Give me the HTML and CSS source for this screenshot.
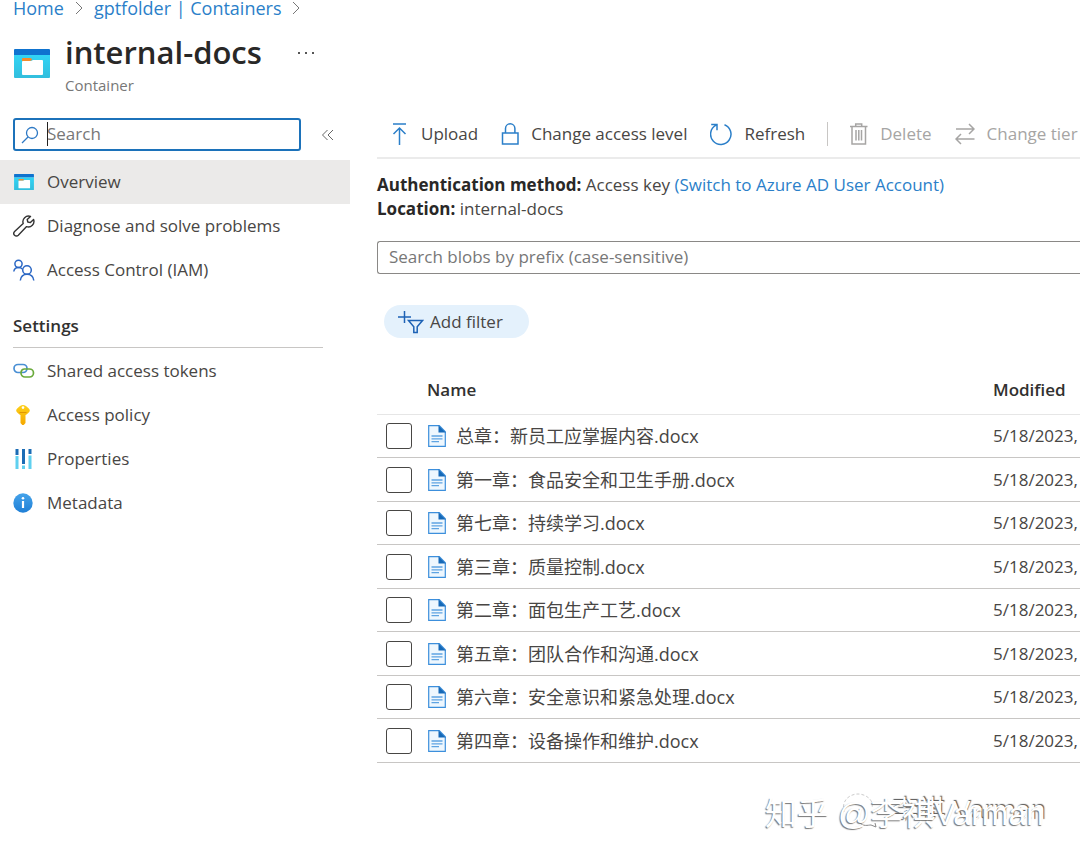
FILE: index.html
```
<!DOCTYPE html>
<html lang="en">
<head>
<meta charset="utf-8" />
<title>internal-docs</title>
<link rel="stylesheet" href="styles.css">
</head>
<body>
<svg class="defs" width="0" height="0">
	<defs>
		<linearGradient id="cyan" x1="0" y1="1" x2="0" y2="0"><stop offset="0" stop-color="#32bedd"/><stop offset="1" stop-color="#32d4f5"/></linearGradient>
		<linearGradient id="info_bg" x1="0" y1="0" x2="0" y2="1"><stop offset="0" stop-color="#45a3ea"/><stop offset="1" stop-color="#1f7fd6"/></linearGradient>
		<linearGradient id="key_bg" x1="0" y1="0" x2="0" y2="1"><stop offset="0" stop-color="#fdd01a"/><stop offset="1" stop-color="#f5a800"/></linearGradient>
	</defs>
	<symbol id="container" viewBox="0 0 36 29">
		<path fill="url(#cyan)" d="M0 6h36v22a1 1 0 0 1-1 1H1a1 1 0 0 1-1-1z"/>
		<path fill="#0f73cf" d="M1 0h34a1 1 0 0 1 1 1v5H0V1a1 1 0 0 1 1-1z"/>
		<path fill="#fff" d="M9 12h8l2-1h9a1 1 0 0 1 1 1v13a1 1 0 0 1-1 1H9a1 1 0 0 1-1-1V13a1 1 0 0 1 1-1z"/>
		<path fill="#f58b2c" d="M9 9h7a2 2 0 0 1 2 2l-2 1H8v-2a1 1 0 0 1 1-1z"/>
	</symbol>
	<symbol id="file" viewBox="0 0 18 22">
		<path fill="#eef7fe" stroke="#3c8fdc" stroke-width="1.2" d="M.7.7h10.600l6 6v14.600H.7z"/>
		<path fill="#1569b8" d="M10.500.3 17.800 7.500H10.500z"/>
		<path stroke="#5fa4e2" stroke-width="1.300" d="M3.500 11h11M3.500 13.800h11M3.500 16.600h7.500"/>
	</symbol>
</svg>
<div id="page">
	<div class="crumbs">
		<a href="#">Home</a>
		<svg width="8" height="14" viewBox="0 0 8 14"><path d="M1 1l6 6-6 6"/></svg>
		<a href="#">gptfolder | Containers</a>
		<svg width="8" height="14" viewBox="0 0 8 14"><path d="M1 1l6 6-6 6"/></svg>
	</div>
	<div class="header">
		<svg class="logo" width="36" height="29"><use href="#container"/></svg>
		<div class="titles">
			<h1>internal-docs</h1>
			<p>Container</p>
		</div>
		<button class="more" aria-label="More">
			<svg width="16" height="4" viewBox="0 0 16 4"><path fill="#555" d="M0 1h2v2H0zM7 1h2v2H7zM14 1h2v2h-2z"/></svg>
		</button>
	</div>
	<div class="content">
		<div class="side">
			<div class="side_search">
				<div class="search_box">
					<svg width="18" height="18" viewBox="0 0 18 18"><g fill="none" stroke="#2e79c4" stroke-width="1.3"><circle cx="11" cy="7" r="5.5"/><path d="M7 11l-6 6"/></g></svg>
					<input type="text" placeholder="Search" aria-label="Search" />
					<span class="caret"></span>
				</div>
				<button class="fold" aria-label="Collapse">
					<svg width="12" height="12" viewBox="0 0 12 12"><path fill="none" stroke="#666" d="M5.500 1l-5 5 5 5M11 1L6 6l5 5"/></svg>
				</button>
			</div>
			<ul class="menu">
				<li class="on"><a href="#"><svg width="20" height="16"><use href="#container"/></svg>Overview</a></li>
				<li><a href="#"><svg width="22" height="22" viewBox="0 0 22 22"><path fill="none" stroke="#333" stroke-width="1.4" stroke-linejoin="round" d="M17.500 1.500a5.600 5.600 0 0 0-7.300 7L1.600 16.600a2.500 2.500 0 0 0 3.700 3.700l8.300-8.700a5.600 5.600 0 0 0 7-7.200l-3.200 3.200-2.600-.6-.6-2.500z"/></svg>Diagnose and solve problems</a></li>
				<li><a href="#"><svg width="22" height="22" viewBox="0 0 22 22"><g fill="none" stroke="#2b67c4" stroke-width="1.500"><circle cx="5.500" cy="4.800" r="3.600"/><circle cx="14" cy="11" r="4.300"/><path d="M.8 12.500c.3-2.500 2-4.100 4.700-4.100 1.700 0 2.900.5 3.800 1.500M7.300 21.500c.5-3.800 3-6.200 6.700-6.200s6.300 2.400 6.800 6.200"/></g></svg>Access Control (IAM)</a></li>
			</ul>
			<h2>Settings</h2>
			<ul class="menu">
				<li><a href="#"><svg width="22" height="22" viewBox="0 0 22 22"><g fill="none" stroke-width="1.700"><rect x="1" y="4.500" width="13" height="8" rx="4" stroke="#4a8fd4"/><path stroke="#6aaa3c" d="M11 9h5.500a4 4 0 0 1 0 8H12a4 4 0 0 1-4-4c0-1.700 1.200-3.600 3-4"/></g></svg>Shared access tokens</a></li>
				<li><a href="#"><svg width="22" height="22" viewBox="0 0 22 22"><path fill="url(#key_bg)" d="M10 1c2 0 3.200 1.200 4.700 2.400 1.200 1 2.100 2 2.100 3s-.9 2-2.100 3.100c-.8.7-1.600 1.200-2.200 1.600v8L10.700 21H9.300L7.500 19v-7.900c-.6-.4-1.400-.9-2.200-1.600-1.200-1.100-2.100-2.100-2.100-3.100s.9-2 2.100-3C6.800 2.200 8 1 10 1z"/><circle cx="10" cy="3.600" r="1.300" fill="#fff"/><path stroke="#d98c00" stroke-width=".8" d="M6.500 8.500h7"/></svg>Access policy</a></li>
				<li><a href="#"><svg width="22" height="22" viewBox="0 0 22 22"><path fill="#1b6cb5" d="M2.500 1h3v6h-3zM9 1h3v15H9zM15.500 1h3v5h-3z"/><path fill="#5fd0ef" d="M2.500 8h3v13h-3zM9 17.500h3V21H9zM15.500 7.500h3V21h-3z"/></svg>Properties</a></li>
				<li><a href="#"><svg width="22" height="22" viewBox="0 0 22 22"><circle cx="10" cy="11" r="9.700" fill="url(#info_bg)"/><circle cx="10" cy="6.300" r="1.300" fill="#fff"/><path fill="#fff" d="M8.900 9h2.200v7H8.900z"/></svg>Metadata</a></li>
			</ul>
		</div>
		<div class="main">
			<div class="tools">
				<button><svg width="18" height="22" viewBox="0 0 18 22"><path d="M2 1h13M8.500 22V5M2.500 11l6-6 6 6"/></svg>Upload</button>
				<button><svg width="18" height="22" viewBox="0 0 18 22"><path d="M1.500 10h15.500v11H1.500zM4.500 10V5.500a4.700 4.700 0 0 1 9.400 0V10"/></svg>Change access level</button>
				<button><svg width="22" height="24" viewBox="1 0 22 24"><path d="M15.500 2.700A10.200 10.200 0 1 1 7 3.200M2.200 2.500H8V8.300"/></svg>Refresh</button>
				<span class="line"></span>
				<button disabled><svg width="18" height="22" viewBox="0 0 18 22"><path d="M0 3.500h17.500M5.700 3.500V1h6v2.500M2 3.500V21h13.500V3.500M6 7v10.500M8.800 7v10.500M11.500 7v10.500"/></svg>Delete</button>
				<button disabled><svg width="20" height="22" viewBox="0 0 20 22"><path d="M1 6h18M14 1l5 5-5 5M19.500 16H1M6 11l-5 5 5 5"/></svg>Change tier</button>
			</div>
			<div class="info">
				<p><b>Authentication method:</b> Access key <a href="#">(Switch to Azure AD User Account)</a></p>
				<p><b>Location:</b> internal-docs</p>
			</div>
			<input class="prefix" type="text" placeholder="Search blobs by prefix (case-sensitive)" aria-label="Search blobs by prefix" />
			<button class="filter"><svg width="26" height="24" viewBox="0 0 26 24"><path fill="none" stroke="#1d62b5" stroke-width="1.500" d="M0 7h13M6.500 1v12M10.500 10.500h14l-5.300 6.300V22.500h-3.400v-5.700z"/></svg>Add filter</button>
			<table>
				<thead>
					<tr><th class="pick"></th><th>Name</th><th class="date">Modified</th></tr>
				</thead>
				<tbody>
					<tr><td><input type="checkbox" id="f1" /></td><td><label for="f1"><svg width="18" height="22"><use href="#file"/></svg>总章：新员工应掌握内容.docx</label></td><td>5/18/2023,</td></tr>
					<tr><td><input type="checkbox" id="f2" /></td><td><label for="f2"><svg width="18" height="22"><use href="#file"/></svg>第一章：食品安全和卫生手册.docx</label></td><td>5/18/2023,</td></tr>
					<tr><td><input type="checkbox" id="f3" /></td><td><label for="f3"><svg width="18" height="22"><use href="#file"/></svg>第七章：持续学习.docx</label></td><td>5/18/2023,</td></tr>
					<tr><td><input type="checkbox" id="f4" /></td><td><label for="f4"><svg width="18" height="22"><use href="#file"/></svg>第三章：质量控制.docx</label></td><td>5/18/2023,</td></tr>
					<tr><td><input type="checkbox" id="f5" /></td><td><label for="f5"><svg width="18" height="22"><use href="#file"/></svg>第二章：面包生产工艺.docx</label></td><td>5/18/2023,</td></tr>
					<tr><td><input type="checkbox" id="f6" /></td><td><label for="f6"><svg width="18" height="22"><use href="#file"/></svg>第五章：团队合作和沟通.docx</label></td><td>5/18/2023,</td></tr>
					<tr><td><input type="checkbox" id="f7" /></td><td><label for="f7"><svg width="18" height="22"><use href="#file"/></svg>第六章：安全意识和紧急处理.docx</label></td><td>5/18/2023,</td></tr>
					<tr><td><input type="checkbox" id="f8" /></td><td><label for="f8"><svg width="18" height="22"><use href="#file"/></svg>第四章：设备操作和维护.docx</label></td><td>5/18/2023,</td></tr>
				</tbody>
			</table>
		</div>
	</div>
	<div class="mark">
		<div class="mark_sub">
			<svg width="40" height="36" viewBox="0 0 40 36"><g fill="none" stroke="#ccc" stroke-width="1"><path stroke-dasharray="3 2" d="M2 20C-1 8 8 2 16 2s16 6 14 14"/><path stroke="#888" d="M17 30c4 5 9 3 12 3l5 2-1-4"/></g></svg>
			<span>李祺 Varman</span>
		</div>
		<div class="mark_top">知乎 @李祺Varman</div>
	</div>
</div>
</body>
</html>
```
FILE: styles.css
```
*{padding:0; margin:0; box-sizing:border-box;}
ul li{list-style:none;}
a{text-decoration:none; color:#2b7fc9;}
body{background:#fff; color:#484644; font:17px/24px "Open Sans","Noto Sans CJK SC",sans-serif;}
button, input{font:inherit; color:inherit; background:none; border:0;}
svg{flex:none; display:block;}
.defs{position:absolute;}

.crumbs{display:flex; align-items:center; gap:11px; height:16px; padding-left:13px; font-size:18px; line-height:16px;}
.crumbs svg{fill:none; stroke:#777;}
.header{display:flex; padding:15px 0 0 14px; height:102px;}
.logo{margin-top:18px;}
.titles{padding-left:15px;}
h1{font-size:31px; line-height:42px; font-weight:600; color:#292827;}
.titles p{font-size:15px; line-height:24px; color:#777;}
.more{width:16px; height:4px; margin:20px 0 0 36px;}

.content{display:flex;}
.side{flex:none; width:350px;}
.side_search{display:flex; align-items:center; gap:21px; height:33px; margin-bottom:9px; padding-left:13px;}
.search_box{position:relative; display:flex; align-items:center; width:288px; height:33px; padding-left:6px; border:2px solid #1c72ba; border-radius:3px;}
.search_box input{flex:1; width:100px; margin-left:8px; padding-bottom:2px; outline:none;}
.caret{position:absolute; left:32px; top:2px; width:1px; height:24px; background:#222;}
::placeholder{color:#777; opacity:1;}
.fold{width:12px; height:12px;}
.menu a{display:flex; align-items:center; height:44px; padding-left:13px; color:#484644;}
.menu svg{width:22px; margin-right:12px;}
.menu .on{background:#ebeae9;}
h2{margin:12px 27px 1px 13px; height:44px; font-size:17px; line-height:44px; font-weight:600; color:#323130; border-bottom:1px solid #c8c6c4;}

.main{flex:1; min-width:0; padding-left:27px;}
.tools{display:flex; align-items:center; gap:23px; height:41px; padding:0 0 8px 14px; border-bottom:2px solid #ebebeb;}
.tools button{display:flex; align-items:center; gap:12px; height:32px; white-space:nowrap;}
.tools svg{fill:none; stroke:#2b7fc9; stroke-width:1.500;}
.tools button:disabled{color:#a6a5a4;}
.tools button:disabled svg{stroke:#a6a5a4;}
.line{width:1px; height:24px; margin:0 -1px; background:#c8c6c4;}
.info{padding:14px 0 20px; white-space:nowrap;}
.info b{font-weight:700; color:#292827;}
.prefix{display:block; width:100%; height:33px; padding:0 0 2px 11px; border:1px solid #8a8886; border-right:0; border-radius:3px 0 0 3px;}
.filter{display:flex; align-items:center; gap:6px; height:33px; margin:31px 0 28px 7px; padding:0 26px 0 14px; border-radius:17px; background:#e4f1fc;}

table{width:100%; table-layout:fixed; border-collapse:separate; border-spacing:0;}
th{height:49px; text-align:left; font-weight:600; color:#323130; border-bottom:1px solid #e6e6e6;}
.pick{width:50px;}
.date{width:87px;}
td{height:43px; border-bottom:1px solid #c8c6c4; white-space:nowrap;}
tr:nth-child(even) td{height:44px;}
td:first-child{padding-left:9px;}
td label{display:flex; align-items:center; gap:10px; padding-left:1px; font-size:18px;}
td input{appearance:none; display:block; width:26px; height:26px; border:1px solid #484644; border-radius:3px;}

/* watermark, two lines of text over each other */
.mark{position:relative; width:288px; height:44px; margin:29px 27px 23px auto; font-family:"Liberation Sans","Noto Sans CJK SC",sans-serif; white-space:nowrap; color:#fff;}
.mark_sub{display:flex; gap:9px; padding-left:77px; font-size:27px; line-height:38px;}
.mark_sub span{text-shadow:1px -1px 1px #555;}
.mark_top{position:absolute; left:0; top:0; font-size:32px; line-height:44px; text-shadow:-1px 1px 1px #777;}
```
